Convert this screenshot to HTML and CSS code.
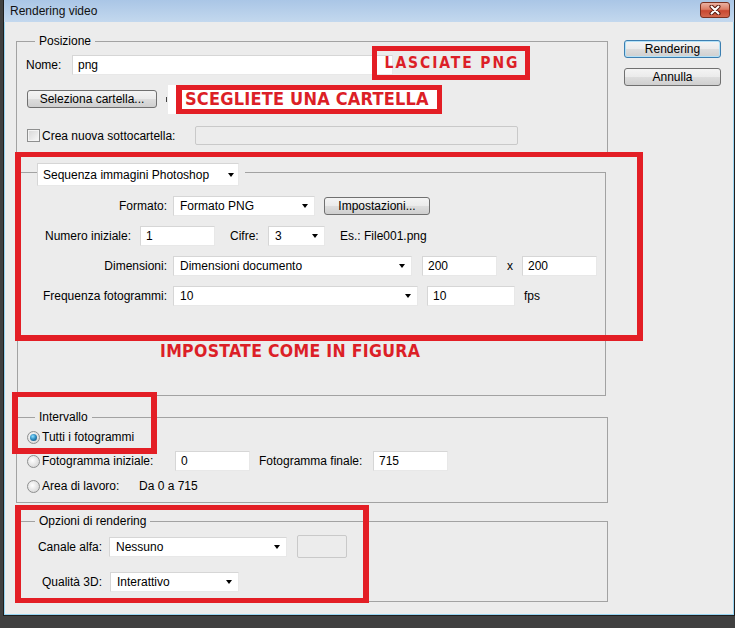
FILE: index.html
```html
<!DOCTYPE html>
<html lang="it">
<head>
<meta charset="utf-8">
<title>Rendering video</title>
<link rel="stylesheet" href="styles.css">
</head>
<body>
<div class="screen">
  <div class="window">
    <div class="titlebar">
      <span class="title">Rendering video</span>
      <span class="close" aria-label="Chiudi">
        <svg width="14" height="10" viewBox="0 0 14 10">
          <path d="M3.5 1.5 L10.5 8.5 M10.5 1.5 L3.5 8.5" stroke="#5a1a10" stroke-width="4" stroke-linecap="round"/>
          <path d="M3.5 1.5 L10.5 8.5 M10.5 1.5 L3.5 8.5" stroke="#ffffff" stroke-width="2" stroke-linecap="round"/>
        </svg>
      </span>
    </div>
    <div class="client">
      <div class="main">
        <fieldset class="group g-pos">
          <legend class="legend">Posizione</legend>
          <div class="row r-nome">
            <span class="lbl w-nome">Nome:</span>
            <div class="field f-nome">png</div>
          </div>
          <div class="row r-sel">
            <div class="btn b-sel">Seleziona cartella...</div>
            <span class="tick"></span>
          </div>
          <div class="row r-chk">
            <span class="check"></span>
            <span class="lbl w-chk">Crea nuova sottocartella:</span>
            <div class="field disabled f-sub"></div>
          </div>
        </fieldset>

        <fieldset class="group g-seq">
          <legend class="legend-sel">
            <div class="select s-seq"><span>Sequenza immagini Photoshop</span><i class="arrow"></i></div>
          </legend>
          <div class="row r-fmt">
            <span class="lbl right w-149">Formato:</span>
            <div class="select s-fmt"><span>Formato PNG</span><i class="arrow"></i></div>
            <div class="btn b-imp">Impostazioni...</div>
          </div>
          <div class="row r-num">
            <span class="lbl w-95">Numero iniziale:</span>
            <div class="field w-75">1</div>
            <span class="lbl w-38 ml-15">Cifre:</span>
            <div class="select s-cif"><span>3</span><i class="arrow"></i></div>
            <span class="lbl ml-15">Es.: File001.png</span>
          </div>
          <div class="row r-dim">
            <span class="lbl right w-149">Dimensioni:</span>
            <div class="select s-dim"><span>Dimensioni documento</span><i class="arrow"></i></div>
            <div class="field w-75 ml-10">200</div>
            <span class="lbl w-15 ml-10">x</span>
            <div class="field w-75">200</div>
          </div>
          <div class="row r-fps">
            <span class="lbl right w-149">Frequenza fotogrammi:</span>
            <div class="select s-fps"><span>10</span><i class="arrow"></i></div>
            <div class="field f-fps">10</div>
            <span class="lbl ml-9">fps</span>
          </div>
        </fieldset>

        <fieldset class="group g-int">
          <legend class="legend">Intervallo</legend>
          <div class="row r-i1">
            <span class="radio checked"></span>
            <span class="lbl">Tutti i fotogrammi</span>
          </div>
          <div class="row r-i2">
            <span class="radio"></span>
            <span class="lbl w-133">Fotogramma iniziale:</span>
            <div class="field w-75">0</div>
            <span class="lbl w-114 ml-9">Fotogramma finale:</span>
            <div class="field w-75">715</div>
          </div>
          <div class="row r-i3">
            <span class="radio"></span>
            <span class="lbl w-97">Area di lavoro:</span>
            <span class="lbl">Da 0 a 715</span>
          </div>
        </fieldset>

        <fieldset class="group g-opt">
          <legend class="legend">Opzioni di rendering</legend>
          <div class="row r-o1">
            <span class="lbl right w-85">Canale alfa:</span>
            <div class="select s-alfa"><span>Nessuno</span><i class="arrow"></i></div>
            <div class="field disabled f-alfa"></div>
          </div>
          <div class="row r-o2">
            <span class="lbl right w-85">Qualità 3D:</span>
            <div class="select s-3d"><span>Interattivo</span><i class="arrow"></i></div>
          </div>
        </fieldset>
      </div>

      <div class="side">
        <div class="btn default b-side">Rendering</div>
        <div class="btn b-side b-ann">Annulla</div>
      </div>
    </div>
  </div>

  <div class="note n-png">LASCIATE PNG</div>
  <div class="note n-cart">SCEGLIETE UNA CARTELLA</div>
  <div class="note n-seq"></div>
  <div class="note-text n-fig">IMPOSTATE COME IN FIGURA</div>
  <div class="note n-int"></div>
  <div class="note n-opt"></div>
</div>
</body>
</html>
```

FILE: styles.css
```css
* { box-sizing: border-box; }
html, body { margin: 0; padding: 0; }
body {
  background: #404040;
  font-family: "Liberation Sans", Arial, sans-serif;
  font-size: 12px;
  color: #000;
}
.screen {
  position: relative;
  width: 735px;
  height: 628px;
  overflow: hidden;
  background: #404040;
}

/* window frame */
.window {
  margin-left: 3px;
  width: 732px;
  height: 616px;
  border: 1px solid #1e1e1e;
  border-top: 0;
  display: flex;
  flex-direction: column;
}
.titlebar {
  height: 22px;
  flex: none;
  display: flex;
  align-items: center;
  justify-content: space-between;
  padding: 0 4px 0 6px;
  background: linear-gradient(#aac6e6, #c3d8ee);
}
.title { font-size: 12px; color: #111; }
.close {
  width: 30px;
  height: 16px;
  margin-top: -2px;
  border: 1px solid #7a3020;
  border-radius: 3px;
  background: linear-gradient(#eab1a2 0%, #dc7d66 45%, #c8472f 55%, #d3674d 100%);
  display: flex;
  align-items: center;
  justify-content: center;
}
.client {
  flex: 1;
  display: flex;
  background: #ececec;
  border: 1px solid #98d4f1;
  border-top: 0;
}

/* columns */
.main {
  margin-left: 11px;
  width: 592px;
  padding-top: 12px;
  display: flex;
  flex-direction: column;
}
.side {
  margin-left: 16px;
  padding-top: 18px;
  display: flex;
  flex-direction: column;
}

/* group boxes */
.group {
  margin: 0;
  padding: 0;
  min-width: 0;
  border: 1px solid #a2a2a2;
}
.legend {
  margin-left: 18px;
  padding: 0 4px;
  line-height: 14px;
  height: 14px;
}
.legend-sel {
  margin-left: 19px;
  padding: 0 6px 0 0;
  height: 18px;
}
.g-pos { padding-bottom: 8px; }
.g-seq { margin-top: 9px; margin-left: 1px; width: 589px; padding-bottom: 89px; }
.g-int { margin-top: 14px; padding-bottom: 6px; }
.g-opt { margin-top: 11px; padding-bottom: 9px; }

/* rows */
.row {
  display: flex;
  align-items: center;
  height: 20px;
  white-space: nowrap;
}
.r-nome { margin-top: 7px; padding-left: 9px; }
.r-sel { margin-top: 15px; height: 18px; padding-left: 10px; }
.r-chk { margin-top: 18px; height: 19px; padding-left: 10px; }
.r-fmt { margin-top: 15px; }
.r-num { margin-top: 10px; padding-left: 27px; }
.r-dim { margin-top: 10px; }
.r-fps { margin-top: 10px; }
.r-i1 { margin-top: 3px; padding-left: 10px; }
.r-i2 { margin-top: 4px; padding-left: 10px; }
.r-i3 { margin-top: 5px; padding-left: 10px; }
.r-o1 { margin-top: 7px; height: 23px; }
.r-o2 { margin-top: 14px; }

/* labels */
.lbl { flex: none; }
.right { text-align: right; }
.w-nome { width: 46px; }
.w-chk { width: 153px; }
.w-149 { width: 149px; }
.w-95 { width: 95px; }
.w-38 { width: 38px; }
.w-15 { width: 15px; }
.w-133 { width: 133px; }
.w-114 { width: 114px; }
.w-97 { width: 97px; }
.w-85 { width: 85px; }
.w-75 { width: 75px; }
.ml-15 { margin-left: 15px; }
.ml-10 { margin-left: 10px; }
.ml-9 { margin-left: 9px; }

/* text fields */
.field {
  flex: none;
  height: 20px;
  background: #fff;
  border: 1px solid;
  border-color: #d6d6d6 #e8e8e8 #e8e8e8 #d6d6d6;
  padding-left: 5px;
  display: flex;
  align-items: center;
}
.field.disabled {
  background: #ececec;
  border: 1px solid #c9c9c9;
  border-radius: 2px;
}
.f-nome { width: 321px; }
.f-sub { width: 323px; height: 19px; }
.f-fps { width: 88px; margin-left: 9px; }
.f-alfa { width: 50px; height: 23px; margin-left: 10px; }

/* selects */
.select {
  flex: none;
  height: 20px;
  background: #fff;
  border: 1px solid;
  border-color: #d6d6d6 #e8e8e8 #e8e8e8 #d6d6d6;
  padding-left: 6px;
  padding-right: 6px;
  display: flex;
  align-items: center;
}
.arrow {
  margin-left: auto;
  width: 0;
  height: 0;
  border-top: 4px solid #000;
  border-left: 3.5px solid transparent;
  border-right: 3.5px solid transparent;
}
.s-seq { width: 202px; height: 23px; padding-left: 5px; padding-right: 4px; }
.s-fmt { width: 142px; margin-left: 6px; }
.s-cif { width: 57px; }
.s-dim { width: 239px; margin-left: 6px; }
.s-fps { width: 245px; margin-left: 6px; }
.s-alfa { width: 178px; margin-left: 7px; }
.s-3d { width: 129px; margin-left: 8px; }

/* buttons */
.btn {
  flex: none;
  height: 18px;
  display: flex;
  align-items: center;
  justify-content: center;
  border: 1px solid #707070;
  border-radius: 3px;
  background: linear-gradient(#f4f4f4 0%, #ebebeb 48%, #dddddd 52%, #cfcfcf 100%);
  color: #000;
}
.b-sel { width: 130px; }
.b-imp { width: 106px; margin-left: 9px; }
.b-side { width: 97px; }
.b-ann { margin-top: 10px; }
.default {
  border-color: #3c7fb1;
  box-shadow: inset 0 0 0 1px #b3e1f7;
}
.tick {
  flex: none;
  margin-left: 9px;
  width: 1px;
  height: 5px;
  background: #444;
}

/* check & radio */
.check {
  flex: none;
  width: 13px;
  height: 13px;
  margin-right: 2px;
  border: 1px solid #8e8f8f;
  background: linear-gradient(135deg, #d6d6d6, #f9f9f9);
  box-shadow: inset 0 0 0 1px #f4f4f4;
}
.radio {
  flex: none;
  width: 13px;
  height: 13px;
  margin-right: 2px;
  border: 1px solid #8e8f8f;
  border-radius: 50%;
  background: radial-gradient(circle at 40% 40%, #ffffff 0%, #e6e6e6 50%, #cfcfcf 100%);
  display: flex;
  align-items: center;
  justify-content: center;
}
.radio.checked::after {
  content: "";
  width: 7px;
  height: 7px;
  border-radius: 50%;
  background: radial-gradient(circle at 40% 35%, #8ee0ff 0%, #2f8fc4 45%, #0e3f63 100%);
}

/* red annotations */
.note {
  position: absolute;
  border: 5px solid #e31e25;
  color: #dc1f27;
  font-family: "Liberation Sans Narrow", "DejaVu Sans Condensed", "Liberation Sans", sans-serif;
  font-weight: bold;
  white-space: nowrap;
}
.note-text {
  position: absolute;
  color: #dc1f27;
  font-family: "Liberation Sans Narrow", "DejaVu Sans Condensed", "Liberation Sans", sans-serif;
  font-weight: bold;
  white-space: nowrap;
}
.n-png {
  left: 372px; top: 46px; width: 158px; height: 34px;
  display: flex; align-items: center; justify-content: center;
  font-size: 15.5px; letter-spacing: 1.9px; padding-left: 2px;
}
.n-cart {
  left: 176px; top: 85px; width: 266px; height: 29px;
  border-left-width: 6px;
  background: #fff;
  box-shadow: -8px 0 0 0 #fff;
  font-size: 18px; line-height: 18px; letter-spacing: 0.2px;
  padding-left: 3px;
}
.n-seq { left: 15px; top: 152px; width: 628px; height: 189px; border-width: 5px 6px 6px 6px; }
.n-fig {
  left: 160px; top: 341px;
  font-size: 17.5px; letter-spacing: 0.3px;
}
.n-int { left: 12px; top: 392px; width: 145px; height: 62px; border-width: 5px 6px 6px 6px; }
.n-opt { left: 15px; top: 505px; width: 354px; height: 98px; border-width: 5px 6px 5px 6px; }
```
